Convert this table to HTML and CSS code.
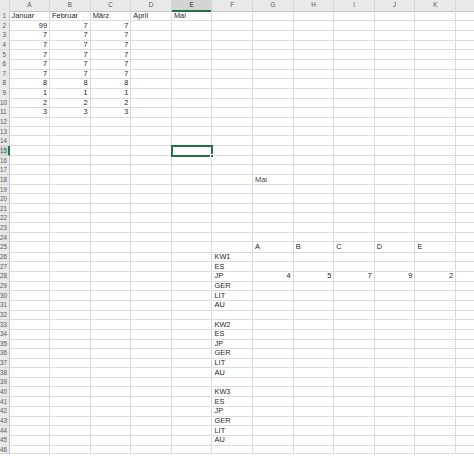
FILE: index.html
```html
<!DOCTYPE html>
<html lang="de">
<head>
<meta charset="utf-8">
<title>Tabelle</title>
<link rel="stylesheet" href="styles.css">
</head>
<body>
<div class="sheet">
<div class="row head"><span class="corner"></span><span>A</span><span>B</span><span>C</span><span>D</span><span class="active">E</span><span>F</span><span>G</span><span>H</span><span>I</span><span>J</span><span>K</span><span></span></div>
<div class="row"><span class="rh">1</span><span>Januar</span><span>Februar</span><span>März</span><span>April</span><span>Mai</span><span></span><span></span><span></span><span></span><span></span><span></span><span></span></div>
<div class="row"><span class="rh">2</span><span class="n">99</span><span class="n">7</span><span class="n">7</span><span></span><span></span><span></span><span></span><span></span><span></span><span></span><span></span><span></span></div>
<div class="row"><span class="rh">3</span><span class="n">7</span><span class="n">7</span><span class="n">7</span><span></span><span></span><span></span><span></span><span></span><span></span><span></span><span></span><span></span></div>
<div class="row"><span class="rh">4</span><span class="n">7</span><span class="n">7</span><span class="n">7</span><span></span><span></span><span></span><span></span><span></span><span></span><span></span><span></span><span></span></div>
<div class="row"><span class="rh">5</span><span class="n">7</span><span class="n">7</span><span class="n">7</span><span></span><span></span><span></span><span></span><span></span><span></span><span></span><span></span><span></span></div>
<div class="row"><span class="rh">6</span><span class="n">7</span><span class="n">7</span><span class="n">7</span><span></span><span></span><span></span><span></span><span></span><span></span><span></span><span></span><span></span></div>
<div class="row"><span class="rh">7</span><span class="n">7</span><span class="n">7</span><span class="n">7</span><span></span><span></span><span></span><span></span><span></span><span></span><span></span><span></span><span></span></div>
<div class="row"><span class="rh">8</span><span class="n">8</span><span class="n">8</span><span class="n">8</span><span></span><span></span><span></span><span></span><span></span><span></span><span></span><span></span><span></span></div>
<div class="row"><span class="rh">9</span><span class="n">1</span><span class="n">1</span><span class="n">1</span><span></span><span></span><span></span><span></span><span></span><span></span><span></span><span></span><span></span></div>
<div class="row"><span class="rh">10</span><span class="n">2</span><span class="n">2</span><span class="n">2</span><span></span><span></span><span></span><span></span><span></span><span></span><span></span><span></span><span></span></div>
<div class="row"><span class="rh">11</span><span class="n">3</span><span class="n">3</span><span class="n">3</span><span></span><span></span><span></span><span></span><span></span><span></span><span></span><span></span><span></span></div>
<div class="row"><span class="rh">12</span><span></span><span></span><span></span><span></span><span></span><span></span><span></span><span></span><span></span><span></span><span></span><span></span></div>
<div class="row"><span class="rh">13</span><span></span><span></span><span></span><span></span><span></span><span></span><span></span><span></span><span></span><span></span><span></span><span></span></div>
<div class="row"><span class="rh">14</span><span></span><span></span><span></span><span></span><span></span><span></span><span></span><span></span><span></span><span></span><span></span><span></span></div>
<div class="row"><span class="rh active">15</span><span></span><span></span><span></span><span></span><span class="sel"></span><span></span><span></span><span></span><span></span><span></span><span></span><span></span></div>
<div class="row"><span class="rh">16</span><span></span><span></span><span></span><span></span><span></span><span></span><span></span><span></span><span></span><span></span><span></span><span></span></div>
<div class="row"><span class="rh">17</span><span></span><span></span><span></span><span></span><span></span><span></span><span></span><span></span><span></span><span></span><span></span><span></span></div>
<div class="row"><span class="rh">18</span><span></span><span></span><span></span><span></span><span></span><span></span><span class="soft">Mai</span><span></span><span></span><span></span><span></span><span></span></div>
<div class="row"><span class="rh">19</span><span></span><span></span><span></span><span></span><span></span><span></span><span></span><span></span><span></span><span></span><span></span><span></span></div>
<div class="row"><span class="rh">20</span><span></span><span></span><span></span><span></span><span></span><span></span><span></span><span></span><span></span><span></span><span></span><span></span></div>
<div class="row"><span class="rh">21</span><span></span><span></span><span></span><span></span><span></span><span></span><span></span><span></span><span></span><span></span><span></span><span></span></div>
<div class="row"><span class="rh">22</span><span></span><span></span><span></span><span></span><span></span><span></span><span></span><span></span><span></span><span></span><span></span><span></span></div>
<div class="row"><span class="rh">23</span><span></span><span></span><span></span><span></span><span></span><span></span><span></span><span></span><span></span><span></span><span></span><span></span></div>
<div class="row"><span class="rh">24</span><span></span><span></span><span></span><span></span><span></span><span></span><span></span><span></span><span></span><span></span><span></span><span></span></div>
<div class="row"><span class="rh">25</span><span></span><span></span><span></span><span></span><span></span><span></span><span>A</span><span>B</span><span>C</span><span>D</span><span>E</span><span></span></div>
<div class="row"><span class="rh">26</span><span></span><span></span><span></span><span></span><span></span><span>KW1</span><span></span><span></span><span></span><span></span><span></span><span></span></div>
<div class="row"><span class="rh">27</span><span></span><span></span><span></span><span></span><span></span><span>ES</span><span></span><span></span><span></span><span></span><span></span><span></span></div>
<div class="row"><span class="rh">28</span><span></span><span></span><span></span><span></span><span></span><span>JP</span><span class="n">4</span><span class="n">5</span><span class="n">7</span><span class="n">9</span><span class="n">2</span><span></span></div>
<div class="row"><span class="rh">29</span><span></span><span></span><span></span><span></span><span></span><span>GER</span><span></span><span></span><span></span><span></span><span></span><span></span></div>
<div class="row"><span class="rh">30</span><span></span><span></span><span></span><span></span><span></span><span>LIT</span><span></span><span></span><span></span><span></span><span></span><span></span></div>
<div class="row"><span class="rh">31</span><span></span><span></span><span></span><span></span><span></span><span>AU</span><span></span><span></span><span></span><span></span><span></span><span></span></div>
<div class="row"><span class="rh">32</span><span></span><span></span><span></span><span></span><span></span><span></span><span></span><span></span><span></span><span></span><span></span><span></span></div>
<div class="row"><span class="rh">33</span><span></span><span></span><span></span><span></span><span></span><span>KW2</span><span></span><span></span><span></span><span></span><span></span><span></span></div>
<div class="row"><span class="rh">34</span><span></span><span></span><span></span><span></span><span></span><span>ES</span><span></span><span></span><span></span><span></span><span></span><span></span></div>
<div class="row"><span class="rh">35</span><span></span><span></span><span></span><span></span><span></span><span>JP</span><span></span><span></span><span></span><span></span><span></span><span></span></div>
<div class="row"><span class="rh">36</span><span></span><span></span><span></span><span></span><span></span><span>GER</span><span></span><span></span><span></span><span></span><span></span><span></span></div>
<div class="row"><span class="rh">37</span><span></span><span></span><span></span><span></span><span></span><span>LIT</span><span></span><span></span><span></span><span></span><span></span><span></span></div>
<div class="row"><span class="rh">38</span><span></span><span></span><span></span><span></span><span></span><span>AU</span><span></span><span></span><span></span><span></span><span></span><span></span></div>
<div class="row"><span class="rh">39</span><span></span><span></span><span></span><span></span><span></span><span></span><span></span><span></span><span></span><span></span><span></span><span></span></div>
<div class="row"><span class="rh">40</span><span></span><span></span><span></span><span></span><span></span><span>KW3</span><span></span><span></span><span></span><span></span><span></span><span></span></div>
<div class="row"><span class="rh">41</span><span></span><span></span><span></span><span></span><span></span><span>ES</span><span></span><span></span><span></span><span></span><span></span><span></span></div>
<div class="row"><span class="rh">42</span><span></span><span></span><span></span><span></span><span></span><span>JP</span><span></span><span></span><span></span><span></span><span></span><span></span></div>
<div class="row"><span class="rh">43</span><span></span><span></span><span></span><span></span><span></span><span>GER</span><span></span><span></span><span></span><span></span><span></span><span></span></div>
<div class="row"><span class="rh">44</span><span></span><span></span><span></span><span></span><span></span><span>LIT</span><span></span><span></span><span></span><span></span><span></span><span></span></div>
<div class="row"><span class="rh">45</span><span></span><span></span><span></span><span></span><span></span><span>AU</span><span></span><span></span><span></span><span></span><span></span><span></span></div>
<div class="row"><span class="rh">46</span><span></span><span></span><span></span><span></span><span></span><span></span><span></span><span></span><span></span><span></span><span></span><span></span></div>
</div>
</body>
</html>
```
FILE: styles.css
```css
html, body {
  margin: 0;
  padding: 0;
  background: #ffffff;
  overflow: hidden;
}
.sheet {
  width: 474px;
  height: 456px;
  overflow: hidden;
  display: flex;
  flex-direction: column;
  font-family: "Liberation Sans", Arial, sans-serif;
  font-size: 7.4px;
  color: #1e1e1e;
}
.row {
  display: grid;
  grid-template-columns: 9.5px repeat(12, 40.6px);
  height: 9.65px;
  flex: none;
}
.row > span {
  box-sizing: border-box;
  border-right: 1px solid #dcdcdc;
  border-bottom: 1px solid #dcdcdc;
  padding: 0 2px;
  line-height: 9.4px;
  white-space: nowrap;
  overflow: visible;
  position: relative;
}
.row > span.n {
  text-align: right;
}
.row > span.soft {
  color: #444;
}
.row.head {
  height: 11px;
}
.row.head > span {
  background: #e9e9e9;
  border-right: 1px solid #d6d6d6;
  border-bottom: 1px solid #c4c4c4;
  text-align: center;
  color: #5a5a5a;
  font-size: 6.3px;
  line-height: 10px;
  padding: 0;
}
.row.head > span.active {
  background: #d4d4d4;
  border-bottom: 2px solid #217346;
  color: #262626;
}
.row > span.rh {
  background: #e9e9e9;
  border-right: 1px solid #c4c4c4;
  border-bottom: 1px solid #d6d6d6;
  color: #5a5a5a;
  font-size: 6.3px;
  text-align: right;
  padding: 0 2.5px 0 0;
  overflow: hidden;
  line-height: 9.6px;
}
.row > span.rh.active {
  background: #d4d4d4;
  color: #217346;
  border-right: 2px solid #217346;
}
.row > span.sel {
  outline: 2px solid #217346;
  outline-offset: -1px;
  z-index: 2;
}
.row > span.sel::after {
  content: "";
  position: absolute;
  right: -3px;
  bottom: -3px;
  width: 4px;
  height: 4px;
  background: #217346;
  border: 1px solid #ffffff;
  box-sizing: border-box;
}
```
